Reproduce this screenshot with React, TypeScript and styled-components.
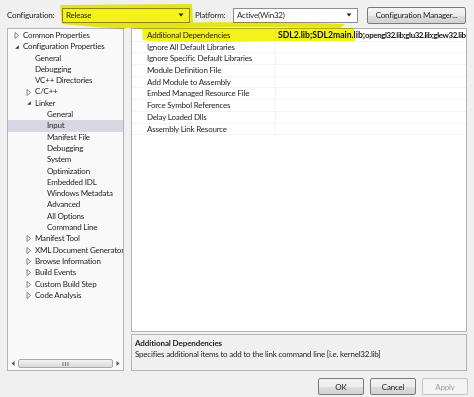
import React from "react";
import styled, { createGlobalStyle } from "styled-components";

const Global = createGlobalStyle`
  html, body { margin: 0; padding: 0; background: #f0f0f0; }
  * { box-sizing: border-box; }
`;

const Window = styled.div`
  position: relative;
  width: 474px;
  height: 397px;
  background: #f0f0f0;
  font-family: Lato, "Open Sans", sans-serif;
  font-size: 8px;
  letter-spacing: -0.2px;
  color: #1e1e1e;
  overflow: hidden;
  display: flex;
  flex-direction: column;
`;

const TopBar = styled.div`
  display: flex;
  align-items: center;
  height: 28px;
  padding: 2px 8px 0 7px;
`;

const Label = styled.span<{ $w: number }>`
  width: ${(p) => p.$w}px;
  white-space: nowrap;
`;

const Select = styled.div<{ $w: number; $mr: number }>`
  width: ${(p) => p.$w}px;
  height: 15px;
  margin-right: ${(p) => p.$mr}px;
  border: 1px solid #8f8f8f;
  background: #fff;
  display: flex;
  align-items: center;
  justify-content: space-between;
  padding: 0 5px 0 3px;
`;

const Button = styled.div<{ $w: number; $disabled?: boolean }>`
  width: ${(p) => p.$w}px;
  height: 17px;
  border: 1px solid ${(p) => (p.$disabled ? "#c4c4c4" : "#7a7a7a")};
  border-radius: 2px;
  background: ${(p) =>
    p.$disabled ? "#f4f4f4" : "linear-gradient(#f4f4f4 0%, #ececec 50%, #dedede 51%, #d2d2d2 100%)"};
  color: ${(p) => (p.$disabled ? "#a0a0a0" : "#1e1e1e")};
  display: flex;
  align-items: center;
  justify-content: center;
  white-space: nowrap;
`;

const Body = styled.div`
  display: flex;
  gap: 7px;
  padding: 0 7px;
  height: 343px;
`;

const TreePanel = styled.div`
  width: 117px;
  height: 343px;
  border: 1px solid #b4b4b4;
  background: #f9f9f9;
  display: flex;
  flex-direction: column;
`;

const TreeList = styled.div`
  flex: 1;
  padding-top: 1px;
  overflow: hidden;
`;

const TreeRow = styled.div<{ $level: number; $selected?: boolean }>`
  height: 11.3px;
  line-height: 11.3px;
  display: flex;
  align-items: center;
  padding-left: ${(p) => 5 + p.$level * 12}px;
  background: ${(p) => (p.$selected ? "#d8d8e4" : "transparent")};
  white-space: nowrap;
`;

const Expander = styled.span`
  width: 10px;
  height: 11px;
  padding-left: 1px;
  display: inline-flex;
  align-items: center;
  justify-content: flex-start;
  flex-shrink: 0;
`;

const ScrollBar = styled.div`
  height: 11px;
  margin: 0 0 1px 0;
  display: flex;
  align-items: center;
  padding: 0 3px;
  gap: 3px;
`;

const Thumb = styled.div`
  flex: 1;
  height: 9px;
  border: 1px solid #a8a8a8;
  border-radius: 2px;
  background: linear-gradient(#f3f3f3, #dadada);
  display: flex;
  align-items: center;
  justify-content: center;
`;

const RightCol = styled.div`
  width: 336px;
  display: flex;
  flex-direction: column;
  gap: 2px;
`;

const Grid = styled.div`
  height: 304px;
  border: 1px solid #b4b4b4;
  background: #fff;
  padding-top: 1px;
  overflow: hidden;
`;

const GridRow = styled.div`
  height: 11.7px;
  display: grid;
  grid-template-columns: 12px 131px 1fr;
  border-bottom: 1px solid #f3f3f3;
  white-space: nowrap;
`;

const Cell = styled.div`
  padding-left: 3px;
  line-height: 11px;
  overflow: hidden;
`;

const ValueCell = styled(Cell)`
  border-left: 1px solid #f3f3f3;
  padding-left: 2px;
  font-size: 8.6px;
  font-weight: 700;
  letter-spacing: 0;
  color: #111;
`;

const ValueRest = styled.span`
  font-size: 7.9px;
  letter-spacing: -0.4px;
`;

const Desc = styled.div`
  height: 37px;
  border: 1px solid #b4b4b4;
  background: #f0f0f0;
  padding: 3px 3px;
  line-height: 11px;
`;

const DescTitle = styled.div`
  font-weight: 700;
  letter-spacing: -0.1px;
`;

const Footer = styled.div`
  display: flex;
  justify-content: flex-end;
  gap: 6px;
  padding: 7px 6px 0 0;
`;

const Overlay = styled.svg`
  position: absolute;
  left: 0;
  top: 0;
  pointer-events: none;
  mix-blend-mode: multiply;
`;

const Collapsed = () => (
  <svg width="6" height="7" viewBox="0 0 6 7">
    <path d="M1 0.5 L4.6 3.5 L1 6.5 Z" fill="none" stroke="#7a7a7a" strokeWidth="0.9" />
  </svg>
);

const Expanded = () => (
  <svg width="6" height="6" viewBox="0 0 6 6">
    <path d="M4.8 1.2 L4.8 4.8 L1.2 4.8 Z" fill="#333" />
  </svg>
);

const DropArrow = () => (
  <svg width="6" height="4" viewBox="0 0 6 4">
    <path d="M0.5 0.5 L5.5 0.5 L3 3.5 Z" fill="#222" />
  </svg>
);

type Node = { label: string; level: number; exp?: "c" | "e"; sel?: boolean };

const tree: Node[] = [
  { label: "Common Properties", level: 0, exp: "c" },
  { label: "Configuration Properties", level: 0, exp: "e" },
  { label: "General", level: 1 },
  { label: "Debugging", level: 1 },
  { label: "VC++ Directories", level: 1 },
  { label: "C/C++", level: 1, exp: "c" },
  { label: "Linker", level: 1, exp: "e" },
  { label: "General", level: 2 },
  { label: "Input", level: 2, sel: true },
  { label: "Manifest File", level: 2 },
  { label: "Debugging", level: 2 },
  { label: "System", level: 2 },
  { label: "Optimization", level: 2 },
  { label: "Embedded IDL", level: 2 },
  { label: "Windows Metadata", level: 2 },
  { label: "Advanced", level: 2 },
  { label: "All Options", level: 2 },
  { label: "Command Line", level: 2 },
  { label: "Manifest Tool", level: 1, exp: "c" },
  { label: "XML Document Generator", level: 1, exp: "c" },
  { label: "Browse Information", level: 1, exp: "c" },
  { label: "Build Events", level: 1, exp: "c" },
  { label: "Custom Build Step", level: 1, exp: "c" },
  { label: "Code Analysis", level: 1, exp: "c" },
];

const props = [
  "Additional Dependencies",
  "Ignore All Default Libraries",
  "Ignore Specific Default Libraries",
  "Module Definition File",
  "Add Module to Assembly",
  "Embed Managed Resource File",
  "Force Symbol References",
  "Delay Loaded Dlls",
  "Assembly Link Resource",
];

export default function App() {
  return (
    <Window>
      <Global />
      <TopBar>
        <Label $w={55}>Configuration:</Label>
        <Select $w={128} $mr={5}>
          <span>Release</span>
          <DropArrow />
        </Select>
        <Label $w={38}>Platform:</Label>
        <Select $w={125} $mr={9}>
          <span>Active(Win32)</span>
          <DropArrow />
        </Select>
        <Button $w={99}>Configuration Manager...</Button>
      </TopBar>
      <Body>
        <TreePanel>
          <TreeList>
            {tree.map((n, i) => (
              <TreeRow key={i} $level={n.level} $selected={n.sel}>
                <Expander>{n.exp === "c" ? <Collapsed /> : n.exp === "e" ? <Expanded /> : null}</Expander>
                {n.label}
              </TreeRow>
            ))}
          </TreeList>
          <ScrollBar>
            <svg width="4" height="5" viewBox="0 0 4 5">
              <path d="M3.5 0 L0.5 2.5 L3.5 5 Z" fill="#555" />
            </svg>
            <Thumb>
              <svg width="7" height="4" viewBox="0 0 7 4">
                <path d="M1 0 V4 M3.5 0 V4 M6 0 V4" stroke="#777" strokeWidth="1" />
              </svg>
            </Thumb>
            <svg width="4" height="5" viewBox="0 0 4 5">
              <path d="M0.5 0 L3.5 2.5 L0.5 5 Z" fill="#555" />
            </svg>
          </ScrollBar>
        </TreePanel>
        <RightCol>
          <Grid>
            {props.map((p, i) => (
              <GridRow key={i}>
                <span />
                <Cell>{p}</Cell>
                <ValueCell>
                  {i === 0 ? (
                    <>
                      SDL2.lib;SDL2main.lib;<ValueRest>opengl32.lib;glu32.lib;glew32.lib</ValueRest>
                    </>
                  ) : null}
                </ValueCell>
              </GridRow>
            ))}
          </Grid>
          <Desc>
            <DescTitle>Additional Dependencies</DescTitle>
            <div>Specifies additional items to add to the link command line [i.e. kernel32.lib]</div>
          </Desc>
        </RightCol>
      </Body>
      <Footer>
        <Button $w={46}>OK</Button>
        <Button $w={46}>Cancel</Button>
        <Button $w={46} $disabled>
          Apply
        </Button>
      </Footer>
      <Overlay width="474" height="397" viewBox="0 0 474 397">
        <g fill="#f4f21a">
          <path d="M60 5 L192 4 L193 23 L130 25 L125 29 L96 27 L62 24 Z" />
          <path d="M100 25 C160 22 260 21 345 24 L340 28 C270 27 200 27 140 29 Z" />
          <path d="M142 28 L272 28 L274 41 L200 42 L150 41 L143 40 Z" />
          <path d="M272 28 L354 28 L355 41 L273 41 Z" />
        </g>
      </Overlay>
    </Window>
  );
}
